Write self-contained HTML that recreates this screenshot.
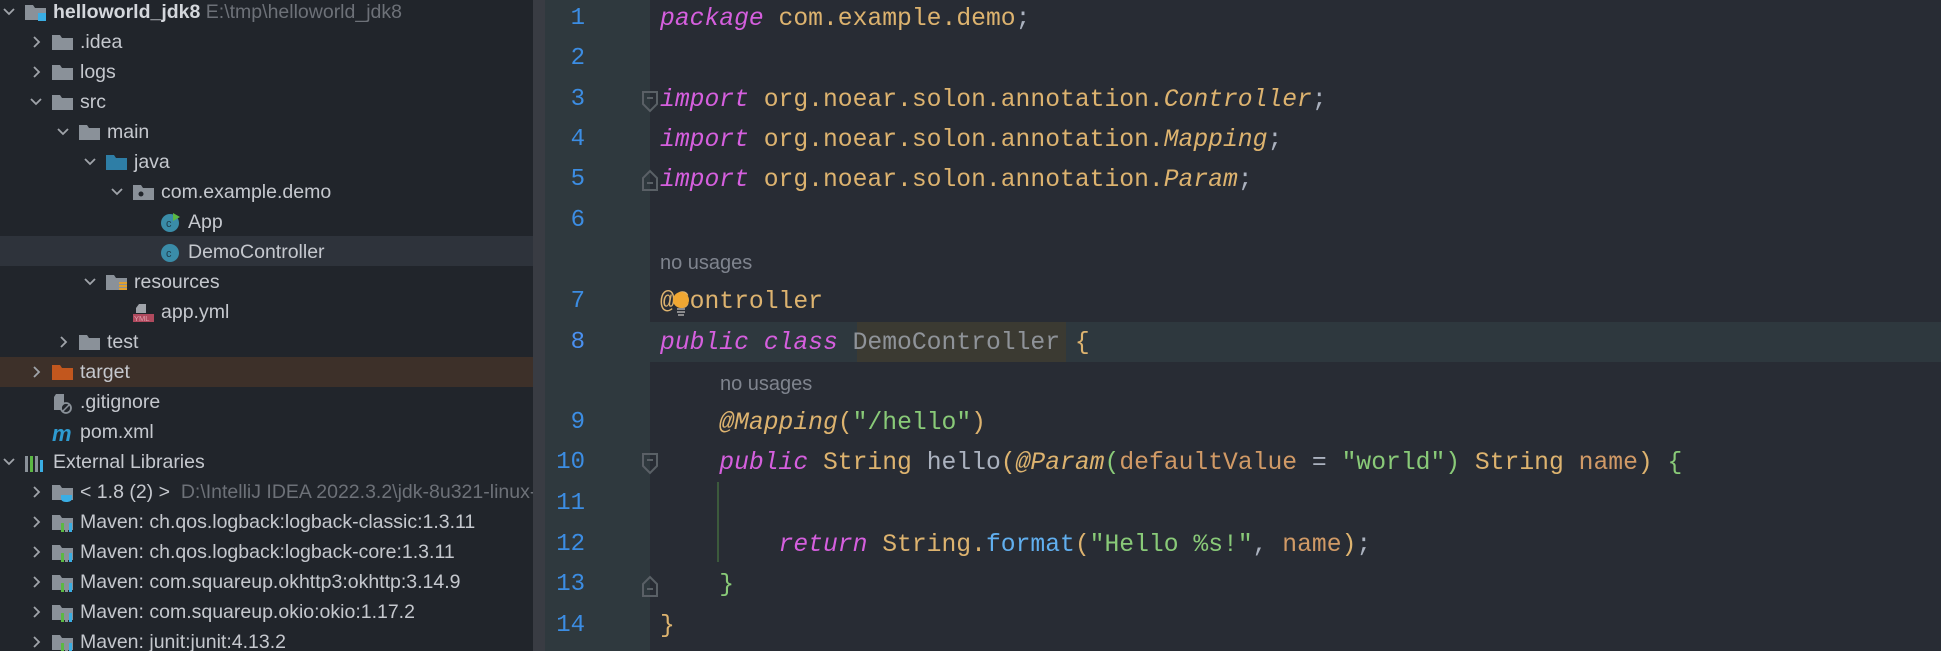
<!DOCTYPE html>
<html><head><meta charset="utf-8"><style>
body{margin:0;width:1941px;height:651px;overflow:hidden;background:#282c34;position:relative;font-family:"Liberation Sans",sans-serif}
#side{position:absolute;left:0;top:0;width:533px;height:651px;background:#21252b;overflow:hidden}
#sb{position:absolute;left:533px;top:0;width:12px;height:651px;background:#393c43}
#gut{position:absolute;left:545px;top:0;width:105px;height:651px;background:#2f393e}
.r{position:absolute;left:0;width:533px;height:30px;line-height:30px;font-size:19.5px;color:#c5c8ce;white-space:nowrap}
.r .t{position:absolute;top:0}
.r svg{position:absolute}
.g{color:#6d7178}
.ln{position:absolute;width:40px;left:545px;text-align:right;font-family:"Liberation Mono",monospace;font-size:24px;color:#3c8de3;line-height:40px}
.c{position:absolute;left:660px;font-family:"Liberation Mono",monospace;font-size:24.7px;line-height:40px;white-space:pre;color:#ddb36f}
.k{color:#d55fde;font-style:italic}
.i{font-style:italic}
.s{color:#89ca78}
.gr{color:#abb2bf}
.b{color:#61afef}
.o{color:#d19a66}
.nu{position:absolute;font-size:20px;color:#7f848e;line-height:40px}
</style></head><body>
<div id="side">
<div class="r" style="top:236px;background:#2e333b"></div>
<div class="r" style="top:357px;background:#3d3029"></div>
</div>
<div id="sb"></div>
<div id="gut"></div>
<div style="position:absolute;left:650px;top:322px;width:1291px;height:40px;background:#2e383e"></div>
<div style="position:absolute;left:857px;top:322px;width:209px;height:40px;background:#3b3a32"></div>
<div style="position:absolute;left:717px;top:482px;width:2px;height:80px;background:#3c5a3c"></div>
<div id="rows"></div>
<!-- line numbers -->
<div class="ln" style="top:-1px">1</div>
<div class="ln" style="top:39px">2</div>
<div class="ln" style="top:80px">3</div>
<div class="ln" style="top:120px">4</div>
<div class="ln" style="top:160px">5</div>
<div class="ln" style="top:201px">6</div>
<div class="ln" style="top:282px">7</div>
<div class="ln" style="top:323px;color:#4a90f0">8</div>
<div class="ln" style="top:403px">9</div>
<div class="ln" style="top:443px">10</div>
<div class="ln" style="top:484px">11</div>
<div class="ln" style="top:525px">12</div>
<div class="ln" style="top:565px">13</div>
<div class="ln" style="top:606px">14</div>
<!-- fold markers -->
<svg style="position:absolute;left:640px;top:90px" width="20" height="26"><path d="M3 2H17V14L10 21L3 14Z" fill="none" stroke="#5a6066" stroke-width="2"/><path d="M7 8H13" stroke="#5a6066" stroke-width="2"/></svg>
<svg style="position:absolute;left:640px;top:166px" width="20" height="26"><path d="M3 24H17V12L10 5L3 12Z" fill="none" stroke="#5a6066" stroke-width="2"/><path d="M7 17H13" stroke="#5a6066" stroke-width="2"/></svg>
<svg style="position:absolute;left:640px;top:452px" width="20" height="26"><path d="M3 2H17V14L10 21L3 14Z" fill="none" stroke="#5a6066" stroke-width="2"/><path d="M7 8H13" stroke="#5a6066" stroke-width="2"/></svg>
<svg style="position:absolute;left:640px;top:572px" width="20" height="26"><path d="M3 24H17V12L10 5L3 12Z" fill="none" stroke="#5a6066" stroke-width="2"/><path d="M7 17H13" stroke="#5a6066" stroke-width="2"/></svg>
<!-- code -->
<div class="c" style="top:-1px"><span class="k">package</span> com.example.demo<span class="gr">;</span></div>
<div class="c" style="top:80px"><span class="k">import</span> org.noear.solon.annotation.<span class="i">Controller</span><span class="gr">;</span></div>
<div class="c" style="top:120px"><span class="k">import</span> org.noear.solon.annotation.<span class="i">Mapping</span><span class="gr">;</span></div>
<div class="c" style="top:160px"><span class="k">import</span> org.noear.solon.annotation.<span class="i">Param</span><span class="gr">;</span></div>
<div class="nu" style="left:660px;top:243px">no usages</div>
<div class="c" style="top:282px">@Controller</div>
<svg style="position:absolute;left:672px;top:290px" width="18" height="30"><circle cx="9" cy="10" r="8" fill="#f0a732"/><path d="M5 19H13M5 22H13M6 25H12" stroke="#aaa" stroke-width="1.5"/></svg>
<div class="c" style="top:323px"><span class="k">public class</span> <span style="color:#8f9399">DemoController</span> {</div>
<div class="nu" style="left:720px;top:364px">no usages</div>
<div class="c" style="top:403px">    <span class="i">@Mapping</span>(<span class="s">"/hello"</span>)</div>
<div class="c" style="top:443px">    <span class="k">public</span> String <span class="gr">hello</span>(<span class="i">@Param</span><span class="s">(</span><span class="o">defaultValue</span> <span class="gr">=</span> <span class="s">"world")</span> String <span class="o">name</span>) <span class="s">{</span></div>
<div class="c" style="top:525px">        <span class="k">return</span> String.<span class="b">format</span>(<span class="s">"Hello %s!"</span><span class="gr">,</span> <span class="o">name</span>)<span class="gr">;</span></div>
<div class="c" style="top:565px">    <span class="s">}</span></div>
<div class="c" style="top:606px">}</div>
<script>
var rows=[
[0,'o','proj','<b style="color:#d4d7dc">helloworld_jdk8</b> <span class="g">E:\\tmp\\helloworld_jdk8</span>'],
[1,'c','f','.idea'],[1,'c','f','logs'],[1,'o','f','src'],[2,'o','f','main'],[3,'o','fb','java'],
[4,'o','pk','com.example.demo'],[5,'','app','App'],[5,'','cls','DemoController'],[3,'o','res','resources'],
[4,'','yml','app.yml'],[2,'c','f','test'],[1,'c','fo','target'],[1,'','git','.gitignore'],[1,'','m','pom.xml'],
[0,'o','lib','External Libraries'],[1,'c','jdk','&lt; 1.8 (2) &gt; &nbsp;<span class="g">D:\\IntelliJ IDEA 2022.3.2\\jdk-8u321-linux-x64</span>'],
[1,'c','mv','Maven: ch.qos.logback:logback-classic:1.3.11'],[1,'c','mv','Maven: ch.qos.logback:logback-core:1.3.11'],
[1,'c','mv','Maven: com.squareup.okhttp3:okhttp:3.14.9'],[1,'c','mv','Maven: com.squareup.okio:okio:1.17.2'],[1,'c','mv','Maven: junit:junit:4.13.2']];
var folder=function(c){return '<path d="M0 1H8L10 4H21V16H0Z" fill="'+c+'"/>'};
var icons={
f:folder('#8a9199'),fb:folder('#2e7ea6'),fo:folder('#c2571e'),
proj:folder('#8a9199')+'<rect x="13" y="9" width="8" height="8" fill="#3aaee4"/>',
pk:folder('#8a9199')+'<circle cx="8" cy="10" r="2.5" fill="#21252b"/>',
res:folder('#8a9199')+'<path d="M13 9H21M13 12H21M13 15H21" stroke="#e0a030" stroke-width="2"/>',
app:'<circle cx="10" cy="9" r="9" fill="#3a8ca8"/><text x="6" y="13" font-size="11" fill="#1e3a48" font-family="Liberation Sans">c</text><path d="M13 -1L20 3L13 7Z" fill="#5bb843"/>',
cls:'<circle cx="10" cy="9" r="9" fill="#3a8ca8"/><text x="6" y="13" font-size="11" fill="#1e3a48" font-family="Liberation Sans">c</text>',
yml:'<path d="M6 0H13V9H3V4Z" fill="#a0a4aa"/><rect x="0" y="10" width="21" height="8" fill="#b04a5e"/><text x="1" y="17" font-size="7.5" fill="#e0a0b0" font-family="Liberation Sans">YML</text>',
git:'<path d="M4 0H12V16H2V3Z" fill="#8a9199"/><circle cx="14" cy="14" r="5" fill="#21252b" stroke="#8a9199" stroke-width="1.8"/><path d="M11 17L17 11" stroke="#8a9199" stroke-width="1.5"/>',
m:'<text x="0" y="17" font-size="22" font-weight="bold" font-style="italic" fill="#2e9bd0" font-family="Liberation Sans">m</text>',
lib:'<rect x="0" y="2" width="3" height="16" fill="#8a9199"/><rect x="5" y="2" width="3" height="16" fill="#5bb843"/><rect x="10" y="2" width="3" height="16" fill="#8a9199"/><rect x="15" y="6" width="3" height="12" fill="#3aaee4"/>',
jdk:folder('#8a9199')+'<path d="M9 11H20V14Q20 18 14 18Q9 18 9 14Z" fill="#3aaee4"/>',
mv:folder('#8a9199')+'<rect x="9" y="9" width="3" height="9" fill="#5bb843"/><rect x="13" y="6" width="3" height="12" fill="#8a9199"/><rect x="17" y="9" width="3" height="9" fill="#3aaee4"/>'
};
var h='';
rows.forEach(function(r,k){
 var top=k*30-3,L=r[0]*27;
 h+='<div class="r" style="top:'+top+'px">';
 if(r[1]=='o')h+='<svg style="left:'+(L+2)+'px;top:9px" width="14" height="12"><path d="M2 3L7 8L12 3" fill="none" stroke="#a0a4aa" stroke-width="1.8"/></svg>';
 if(r[1]=='c')h+='<svg style="left:'+(L+4)+'px;top:8px" width="12" height="14"><path d="M3 2L8 7L3 12" fill="none" stroke="#a0a4aa" stroke-width="1.8"/></svg>';
 h+='<svg style="left:'+(L+25)+'px;top:7px" width="22" height="19" overflow="visible">'+icons[r[2]]+'</svg>';
 h+='<span class="t" style="left:'+(L+53)+'px">'+r[3]+'</span></div>';
});
document.getElementById('side').insertAdjacentHTML('beforeend',h);
</script>
</body></html>
